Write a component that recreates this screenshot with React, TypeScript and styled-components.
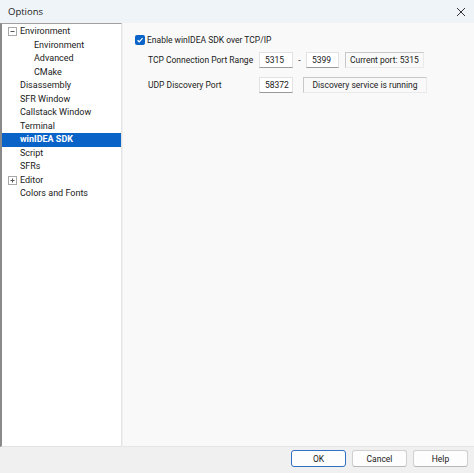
import React, { FunctionComponent } from "react";
import styled, { createGlobalStyle } from "styled-components";

const FONT = `Roboto, "Liberation Sans", "Noto Sans", sans-serif`;

const GlobalStyle = createGlobalStyle`
  html, body {
    margin: 0;
    padding: 0;
    background: #ffffff;
  }

  body {
    font-family: ${FONT};
    font-size: 9px;
    color: #1a1a1a;
  }
`;

const StyledWindow = styled.div`
  display: flex;
  flex-direction: column;
  width: 474px;
  height: 473px;
  overflow: hidden;
  background: #f0f0f0;
`;

const StyledTitleBar = styled.div`
  align-items: center;
  background: #eff4f9;
  display: flex;
  height: 23px;
  justify-content: space-between;
  padding: 0 6px 0 8px;
  flex-shrink: 0;
`;

const StyledTitle = styled.span`
  font-family: "Open Sans", "Noto Sans", sans-serif;
  font-size: 9.5px;
  color: #1b1b1b;
`;

const StyledClose = styled.svg`
  width: 10px;
  height: 10px;
  margin-right: 2px;
`;

const StyledBody = styled.div`
  display: flex;
  height: 424px;
  flex-shrink: 0;
`;

const StyledTree = styled.ul`
  background: #ffffff;
  border-left: 2px solid #8a8a8a;
  border-top: 1px solid #a0a0a0;
  border-right: 1px solid #e3e3e3;
  border-bottom: 1px solid #e3e3e3;
  box-sizing: border-box;
  list-style: none;
  margin: 0;
  padding: 1px 0 0 0;
  width: 122px;
`;

const StyledTreeRow = styled.li<{ $depth: number; $selected?: boolean }>`
  align-items: center;
  background: ${({ $selected }) => ($selected ? "#0a64c8" : "transparent")};
  color: ${({ $selected }) => ($selected ? "#ffffff" : "#1a1a1a")};
  display: flex;
  font-family: ${FONT};
  font-size: 9px;
  font-weight: ${({ $selected }) => ($selected ? 700 : 400)};
  height: 13.5px;
  line-height: 13.5px;
  padding-left: ${({ $depth }) => ($depth === 0 ? 6 : 32)}px;
  white-space: nowrap;
`;

const StyledExpander = styled.span`
  align-items: center;
  border: 1px solid #a8a8a8;
  box-sizing: border-box;
  display: inline-flex;
  height: 9px;
  justify-content: center;
  margin-right: 3px;
  width: 9px;
`;

const StyledExpanderSpacer = styled.span`
  display: inline-block;
  width: 12px;
`;

const StyledPanel = styled.div`
  background: #f9f9f9;
  border-bottom: 1px solid #e6e6e6;
  box-sizing: border-box;
  display: flex;
  flex: 1;
  flex-direction: column;
  font-size: 8.5px;
  margin-left: 1px;
  padding: 12px 0 0 12px;
`;

const StyledCheckRow = styled.label`
  align-items: center;
  display: flex;
  gap: 2px;
`;

const StyledCheckbox = styled.span`
  align-items: center;
  background: #0a64c8;
  border-radius: 2px;
  display: inline-flex;
  height: 10px;
  justify-content: center;
  width: 10px;
`;

const StyledFieldGrid = styled.div`
  display: grid;
  grid-template-columns: 111px auto;
  row-gap: 9px;
  margin: 7px 0 0 13px;
`;

const StyledFieldLabel = styled.span`
  align-self: center;
  white-space: nowrap;
`;

const StyledFieldControls = styled.div`
  align-items: center;
  display: flex;
`;

const StyledInput = styled.div<{ $width: number }>`
  background: #ffffff;
  border: 1px solid #e2e2e2;
  border-bottom-color: #9a9a9a;
  box-sizing: border-box;
  height: 16px;
  line-height: 14px;
  padding-left: 5px;
  width: ${({ $width }) => $width}px;
`;

const StyledDash = styled.span`
  text-align: center;
  width: 13px;
`;

const StyledStatusBox = styled.div<{ $width: number; $center?: boolean; $left: number }>`
  border: 1px solid #c8c8c8;
  border-right-color: #eaeaea;
  border-bottom-color: #eaeaea;
  box-sizing: border-box;
  height: 16px;
  line-height: 14px;
  margin-left: ${({ $left }) => $left}px;
  padding-left: ${({ $center }) => ($center ? 0 : 4)}px;
  text-align: ${({ $center }) => ($center ? "center" : "left")};
  white-space: nowrap;
  width: ${({ $width }) => $width}px;
`;

const StyledFooter = styled.div`
  align-items: flex-start;
  display: flex;
  flex: 1;
  gap: 6px;
  justify-content: flex-end;
  padding: 3px 6px 0 0;
`;

const StyledButton = styled.button<{ $primary?: boolean }>`
  background: #fdfdfd;
  border: 1px solid ${({ $primary }) => ($primary ? "#2f6fc4" : "#d0d0d0")};
  border-bottom-color: ${({ $primary }) => ($primary ? "#2f6fc4" : "#b8b8b8")};
  border-radius: 3px;
  color: #1a1a1a;
  font-family: ${FONT};
  font-size: 8.5px;
  height: 17px;
  padding: 0;
  width: 55px;
`;

type TreeItem = {
  label: string;
  depth: number;
  expander?: "open" | "closed";
  selected?: boolean;
};

const TREE_ITEMS: TreeItem[] = [
  { label: "Environment", depth: 0, expander: "open" },
  { label: "Environment", depth: 1 },
  { label: "Advanced", depth: 1 },
  { label: "CMake", depth: 1 },
  { label: "Disassembly", depth: 0 },
  { label: "SFR Window", depth: 0 },
  { label: "Callstack Window", depth: 0 },
  { label: "Terminal", depth: 0 },
  { label: "winIDEA SDK", depth: 0, selected: true },
  { label: "Script", depth: 0 },
  { label: "SFRs", depth: 0 },
  { label: "Editor", depth: 0, expander: "closed" },
  { label: "Colors and Fonts", depth: 0 },
];

const Expander: FunctionComponent<{ open: boolean }> = ({ open }) => (
  <StyledExpander>
    <svg width="7" height="7" viewBox="0 0 7 7">
      <path d="M1.5 3.5h4" stroke="#555" strokeWidth="1" />
      {!open && <path d="M3.5 1.5v4" stroke="#555" strokeWidth="1" />}
    </svg>
  </StyledExpander>
);

export default function App() {
  return (
    <>
      <GlobalStyle />
      <StyledWindow>
        <StyledTitleBar>
          <StyledTitle>Options</StyledTitle>
          <StyledClose viewBox="0 0 10 10">
            <path d="M1 1L9 9M9 1L1 9" stroke="#333" strokeWidth="1" />
          </StyledClose>
        </StyledTitleBar>

        <StyledBody>
          <StyledTree>
            {TREE_ITEMS.map((item, index) => (
              <StyledTreeRow key={index} $depth={item.depth} $selected={item.selected}>
                {item.depth === 0 &&
                  (item.expander ? <Expander open={item.expander === "open"} /> : <StyledExpanderSpacer />)}
                {item.label}
              </StyledTreeRow>
            ))}
          </StyledTree>

          <StyledPanel>
            <StyledCheckRow>
              <StyledCheckbox>
                <svg width="8" height="8" viewBox="0 0 8 8">
                  <path d="M1.5 4.2L3.2 5.8L6.6 2.2" stroke="#fff" strokeWidth="1.2" fill="none" />
                </svg>
              </StyledCheckbox>
              Enable winIDEA SDK over TCP/IP
            </StyledCheckRow>

            <StyledFieldGrid>
              <StyledFieldLabel>TCP Connection Port Range</StyledFieldLabel>
              <StyledFieldControls>
                <StyledInput $width={34}>5315</StyledInput>
                <StyledDash>-</StyledDash>
                <StyledInput $width={33}>5399</StyledInput>
                <StyledStatusBox $width={79} $left={6}>
                  Current port: 5315
                </StyledStatusBox>
              </StyledFieldControls>

              <StyledFieldLabel>UDP Discovery Port</StyledFieldLabel>
              <StyledFieldControls>
                <StyledInput $width={34}>58372</StyledInput>
                <StyledStatusBox $width={124} $left={10} $center>
                  Discovery service is running
                </StyledStatusBox>
              </StyledFieldControls>
            </StyledFieldGrid>
          </StyledPanel>
        </StyledBody>

        <StyledFooter>
          <StyledButton $primary>OK</StyledButton>
          <StyledButton>Cancel</StyledButton>
          <StyledButton>Help</StyledButton>
        </StyledFooter>
      </StyledWindow>
    </>
  );
}
